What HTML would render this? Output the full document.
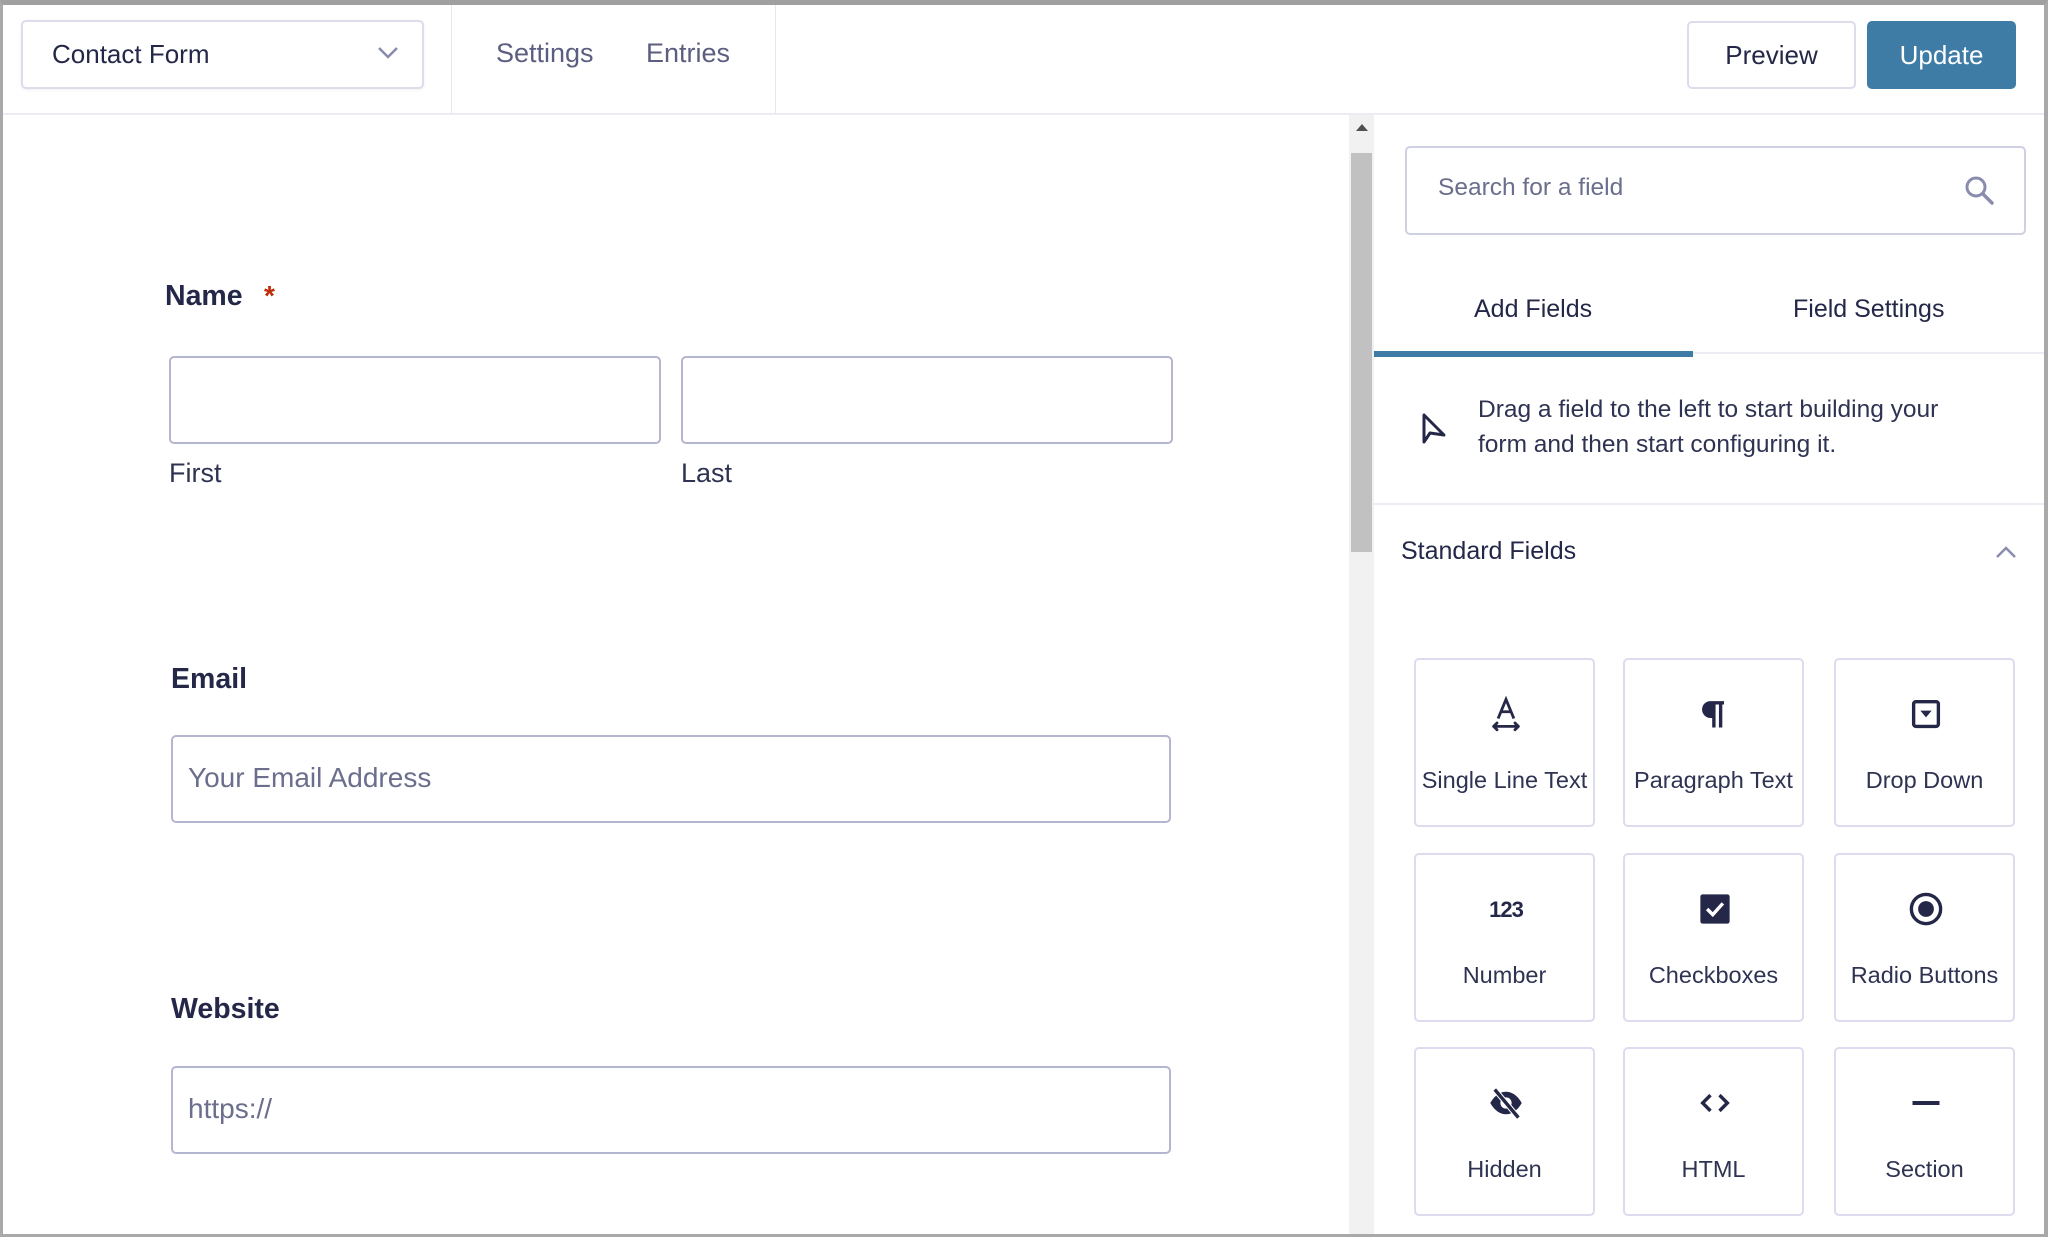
<!DOCTYPE html>
<html><head><meta charset="utf-8"><style>
*{box-sizing:border-box;margin:0;padding:0}
body{width:2048px;height:1237px;background:#fff;font-family:"Liberation Sans",sans-serif;color:#242748;position:relative;overflow:hidden}
.a{position:absolute}
.frame{left:0;top:0;width:2048px;height:1237px;border:3px solid #a9a9a9;border-top:5px solid #a0a0a0;border-right:4px solid #a9a9a9}
.inp{border:2px solid #b4b5cf;border-radius:5px;background:#fff}
.card{width:181px;height:169px;border:2px solid #dcdcee;border-radius:5px;background:#fff;text-align:center}
.card svg{position:absolute;left:72px;top:36px}
.card span{position:absolute;left:-5px;right:-5px;top:107px;font-size:23.5px;color:#2f3352}
.t{white-space:nowrap}
</style></head><body>
<div class="a" style="left:0;top:113px;width:2048px;height:2px;background:#ececf4"></div>
<div class="a" style="left:451px;top:0;width:1px;height:114px;background:#e6e6f0"></div>
<div class="a" style="left:775px;top:0;width:1px;height:114px;background:#e6e6f0"></div>
<div class="a" style="left:21px;top:20px;width:403px;height:69px;border:2px solid #dcdcec;border-radius:5px;box-shadow:0 1px 3px rgba(0,0,0,.06)"></div>
<div class="a t" style="left:52px;top:39px;font-size:26px;color:#242748">Contact Form</div>
<svg class="a" style="left:377px;top:46px" width="22" height="14" viewBox="0 0 22 14"><path d="M2 2l9 9 9-9" fill="none" stroke="#8a8cae" stroke-width="2.5"/></svg>
<div class="a t" style="left:496px;top:38px;font-size:27px;color:#5b5e80">Settings</div>
<div class="a t" style="left:646px;top:38px;font-size:27px;color:#5b5e80">Entries</div>
<div class="a" style="left:1687px;top:21px;width:169px;height:68px;border:2px solid #dcdcec;border-radius:5px;text-align:center;line-height:64px;font-size:26px;color:#242748">Preview</div>
<div class="a" style="left:1867px;top:21px;width:149px;height:68px;background:#3e7ca6;border-radius:5px;text-align:center;line-height:68px;font-size:26px;color:#fff">Update</div>

<div class="a" style="left:1349px;top:115px;width:25px;height:1122px;background:#f1f1f1"></div>
<div class="a" style="left:1351px;top:153px;width:21px;height:399px;background:#c1c1c1"></div>
<div class="a" style="left:1356px;top:124px;width:0;height:0;border-left:6px solid transparent;border-right:6px solid transparent;border-bottom:7px solid #505050"></div>

<div class="a t" style="left:165px;top:280px;font-size:28.5px;font-weight:bold">Name</div>
<div class="a t" style="left:264px;top:280px;font-size:28px;font-weight:bold;color:#c02b0a">*</div>
<div class="a inp" style="left:169px;top:356px;width:492px;height:88px"></div>
<div class="a inp" style="left:681px;top:356px;width:492px;height:88px"></div>
<div class="a t" style="left:169px;top:458px;font-size:27px;color:#2f3352">First</div>
<div class="a t" style="left:681px;top:458px;font-size:27px;color:#2f3352">Last</div>
<div class="a t" style="left:171px;top:663px;font-size:28.5px;font-weight:bold">Email</div>
<div class="a inp" style="left:171px;top:735px;width:1000px;height:88px"></div>
<div class="a t" style="left:188px;top:762px;font-size:28px;color:#6b6e8c">Your Email Address</div>
<div class="a t" style="left:171px;top:993px;font-size:28.5px;font-weight:bold">Website</div>
<div class="a inp" style="left:171px;top:1066px;width:1000px;height:88px"></div>
<div class="a t" style="left:188px;top:1093px;font-size:28px;color:#6b6e8c">https://</div>

<div class="a inp" style="left:1405px;top:146px;width:621px;height:89px;border-color:#cfd0e2"></div>
<div class="a t" style="left:1438px;top:174px;font-size:24.5px;color:#6b6e8c">Search for a field</div>
<svg class="a" style="left:1963px;top:174px" width="32" height="32" viewBox="0 0 32 32"><circle cx="13" cy="13" r="9" fill="none" stroke="#8a8cae" stroke-width="3"/><path d="M20 20l9 9" stroke="#8a8cae" stroke-width="3.5" stroke-linecap="round"/></svg>
<div class="a t" style="left:1474px;top:295px;font-size:25px;color:#242748">Add Fields</div>
<div class="a t" style="left:1793px;top:295px;font-size:25px;color:#242748">Field Settings</div>
<div class="a" style="left:1374px;top:352px;width:670px;height:2px;background:#ececf4"></div>
<div class="a" style="left:1374px;top:351px;width:319px;height:6px;background:#3e7ca6"></div>
<svg class="a" style="left:1420px;top:412px" width="28" height="34" viewBox="0 0 28 34"><path d="M4 3v27l6-9 14 2z" fill="none" stroke="#242748" stroke-width="3" stroke-linejoin="round"/></svg>
<div class="a" style="left:1478px;top:392px;font-size:24.5px;line-height:35px;color:#2f3352;width:560px">Drag a field to the left to start building your<br>form and then start configuring it.</div>
<div class="a" style="left:1374px;top:503px;width:670px;height:2px;background:#ececf4"></div>
<div class="a t" style="left:1401px;top:537px;font-size:25px;color:#242748">Standard Fields</div>
<svg class="a" style="left:1994px;top:544px" width="24" height="16" viewBox="0 0 24 16"><path d="M3 13l9-9 9 9" fill="none" stroke="#8a8cae" stroke-width="2.5"/></svg>

<div class="a card" style="left:1414px;top:658px"><svg width="36" height="36" viewBox="0 0 32 32"><path d="M9 20l7-17 7 17M11.5 14h9" fill="none" stroke="#242748" stroke-width="2.5"/><path d="M5 27h22M5 27l3-3M5 27l3 3M27 27l-3-3M27 27l-3 3" fill="none" stroke="#242748" stroke-width="2.5" stroke-linecap="round"/></svg><span>Single Line Text</span></div>
<div class="a card" style="left:1623px;top:658px"><svg width="36" height="36" viewBox="0 0 32 32"><path d="M14 6h-2a6 6 0 000 12h2zM14 6h10M15 6v22M21 6v22" fill="#242748" stroke="#242748" stroke-width="3"/></svg><span>Paragraph Text</span></div>
<div class="a card" style="left:1834px;top:658px"><svg width="36" height="36" viewBox="0 0 32 32"><rect x="5" y="5" width="22" height="22" rx="2" fill="none" stroke="#242748" stroke-width="3"/><path d="M11 13h10l-5 6z" fill="#242748"/></svg><span>Drop Down</span></div>
<div class="a card" style="left:1414px;top:853px"><svg width="36" height="36" viewBox="0 0 36 36"><text x="18" y="26" text-anchor="middle" font-family="Liberation Sans" font-weight="bold" font-size="22" letter-spacing="-1" fill="#242748">123</text></svg><span>Number</span></div>
<div class="a card" style="left:1623px;top:853px"><svg width="36" height="36" viewBox="0 0 32 32"><rect x="3" y="3" width="26" height="26" rx="2" fill="#242748"/><path d="M9 16l5 5 9-10" fill="none" stroke="#fff" stroke-width="3"/></svg><span>Checkboxes</span></div>
<div class="a card" style="left:1834px;top:853px"><svg width="36" height="36" viewBox="0 0 32 32"><circle cx="16" cy="16" r="13" fill="none" stroke="#242748" stroke-width="3"/><circle cx="16" cy="16" r="7" fill="#242748"/></svg><span>Radio Buttons</span></div>
<div class="a card" style="left:1414px;top:1047px"><svg width="36" height="36" viewBox="0 0 32 32"><path d="M2 16c4-7 9-10 14-10s10 3 14 10c-4 7-9 10-14 10S6 23 2 16z" fill="#242748"/><circle cx="16" cy="16" r="5" fill="#fff"/><path d="M6 4l21 25" stroke="#fff" stroke-width="5"/><path d="M6 4l21 25" stroke="#242748" stroke-width="3"/></svg><span>Hidden</span></div>
<div class="a card" style="left:1623px;top:1047px"><svg width="36" height="36" viewBox="0 0 32 32"><path d="M12 9l-7 7 7 7M20 9l7 7-7 7" fill="none" stroke="#242748" stroke-width="3"/></svg><span>HTML</span></div>
<div class="a card" style="left:1834px;top:1047px"><svg width="36" height="36" viewBox="0 0 32 32"><path d="M4 16h24" stroke="#242748" stroke-width="3.5"/></svg><span>Section</span></div>

<div class="a frame"></div>
</body></html>
